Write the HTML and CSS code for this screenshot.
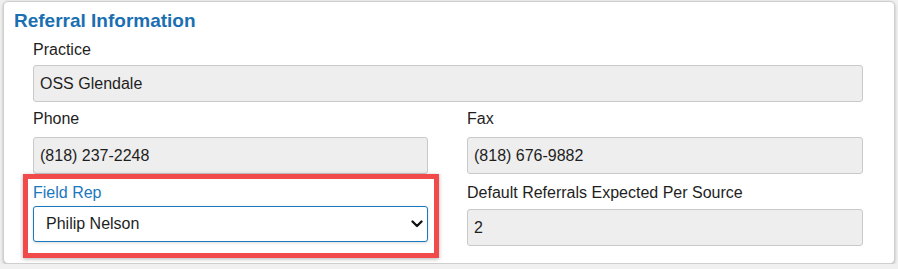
FILE: index.html
```html
<!DOCTYPE html>
<html>
<head>
<meta charset="utf-8">
<link rel="stylesheet" href="styles.css">
</head>
<body>
<div class="card">
  <h2 class="title">Referral Information</h2>
  <div class="fields">
    <div class="field full">
      <label class="label">Practice</label>
      <div class="input">OSS Glendale</div>
    </div>
    <div class="field">
      <label class="label">Phone</label>
      <div class="input">(818) 237-2248</div>
    </div>
    <div class="field">
      <label class="label">Fax</label>
      <div class="input">(818) 676-9882</div>
    </div>
    <div class="field highlight">
      <label class="label active">Field Rep</label>
      <div class="select">
        <span>Philip Nelson</span>
        <svg class="chev" width="12" height="8" viewBox="0 0 12 8"><path d="M1.5 1.5 L6 6 L10.5 1.5" fill="none" stroke="#111" stroke-width="2.3" stroke-linecap="round" stroke-linejoin="round"/></svg>
      </div>
    </div>
    <div class="field">
      <label class="label">Default Referrals Expected Per Source</label>
      <div class="input low">2</div>
    </div>
  </div>
</div>
</body>
</html>
```
FILE: styles.css
```css
html, body {
  margin: 0;
  padding: 0;
  background: #f0f0f0;
}
body {
  padding: 1px 0 0 3px;
  font-family: "Liberation Sans", Arial, sans-serif;
  color: #1e1e1e;
}
.card {
  box-sizing: border-box;
  width: 892px;
  height: 263px;
  background: #fff;
  border: 1px solid #cfcfcf;
  border-radius: 5px;
  box-shadow: 0 1px 3px rgba(0,0,0,0.25);
  padding: 8px 0 0 10px;
}
.title {
  margin: 0;
  font-size: 19px;
  line-height: 22px;
  font-weight: bold;
  color: #1a6fb3;
}
.fields {
  display: grid;
  grid-template-columns: 395px 396px;
  column-gap: 39px;
  padding-left: 19px;
}
.field {
  display: flex;
  flex-direction: column;
}
.full {
  grid-column: 1 / 3;
}
.label {
  font-size: 16px;
  line-height: 18px;
  margin-top: 8px;
  margin-bottom: 9px;
  color: #1e1e1e;
}
.full .label {
  margin-top: 9px;
  margin-bottom: 6px;
}
.highlight .label,
.field:nth-child(5) .label {
  margin-top: 10px;
}
.label.active {
  color: #1a78be;
  margin-bottom: 4px;
}
.input {
  box-sizing: border-box;
  height: 37px;
  background: #eeeeee;
  border: 1px solid #c9c9c9;
  border-radius: 3px;
  padding: 0 6px;
  font-size: 16px;
  line-height: 35px;
  color: #1e1e1e;
}
.input.low {
  margin-top: -2px;
}
.select {
  box-sizing: border-box;
  height: 36px;
  background: #fff;
  border: 1px solid #1a78be;
  border-radius: 3px;
  padding: 0 4px 0 12px;
  font-size: 16px;
  line-height: 34px;
  color: #1e1e1e;
  display: flex;
  justify-content: space-between;
  align-items: center;
  box-shadow: 0 1px 3px rgba(0,0,0,0.15);
}
.highlight {
  position: relative;
}
.highlight::after {
  content: "";
  position: absolute;
  left: -10px;
  right: -11px;
  top: 0;
  bottom: -12px;
  border: 5px solid #f14a4a;
  box-shadow: 0 1px 4px rgba(0,0,0,0.3);
  pointer-events: none;
}
```
